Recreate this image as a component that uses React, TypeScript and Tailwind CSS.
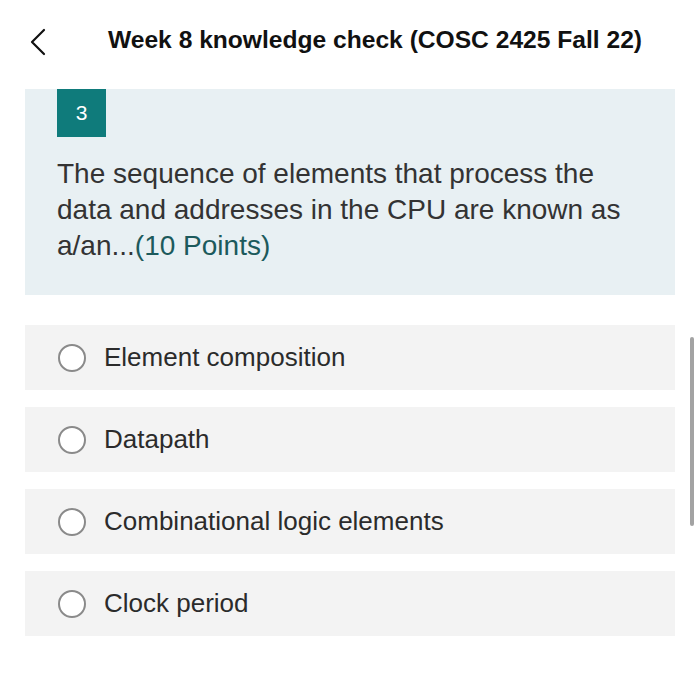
const options = [
  'Element composition',
  'Datapath',
  'Combinational logic elements',
  'Clock period',
];

export default function App() {
  return (
    <div className="relative w-[700px] h-[677px] bg-white font-['Liberation_Sans',Arial,sans-serif] overflow-hidden">
      <header className="h-[89px] flex items-center">
        <svg width="16" height="28" viewBox="0 0 16 28" className="ml-[30px] mt-[-6px]" fill="none">
          <path d="M14 2 L2 14 L14 26" stroke="#111" strokeWidth="2.2" strokeLinecap="round" strokeLinejoin="round" />
        </svg>
        <h1 className="ml-[62px] mt-[-8px] text-[24.6px] font-bold text-[#111]">
          Week 8 knowledge check (COSC 2425 Fall 22)
        </h1>
      </header>

      <section className="mx-[25px] h-[206px] bg-[#e8f0f3] px-[32px]">
        <div className="w-[49px] h-[48px] bg-[#0f7b7b] flex items-center justify-center text-white text-[21px]">3</div>
        <p className="mt-[19px] text-[28px] leading-[36px] text-[#333]">
          The sequence of elements that process the data and addresses in the CPU are known as a/an...
          <span className="text-[#1c5a5c]">(10 Points)</span>
        </p>
      </section>

      <div className="mt-[30px] mx-[25px] flex flex-col gap-[17px]">
        {options.map((o) => (
          <div key={o} className="h-[65px] bg-[#f3f3f3] flex items-center px-[33px]">
            <span className="w-[28px] h-[28px] rounded-full border-2 border-[#8a8a8a] bg-white shrink-0" />
            <span className="ml-[18px] text-[26px] text-[#2b2b2b]">{o}</span>
          </div>
        ))}
      </div>

      <div className="absolute left-[690px] top-[337px] w-[4px] h-[189px] rounded-full bg-[#a3a3a3]" />
    </div>
  );
}
